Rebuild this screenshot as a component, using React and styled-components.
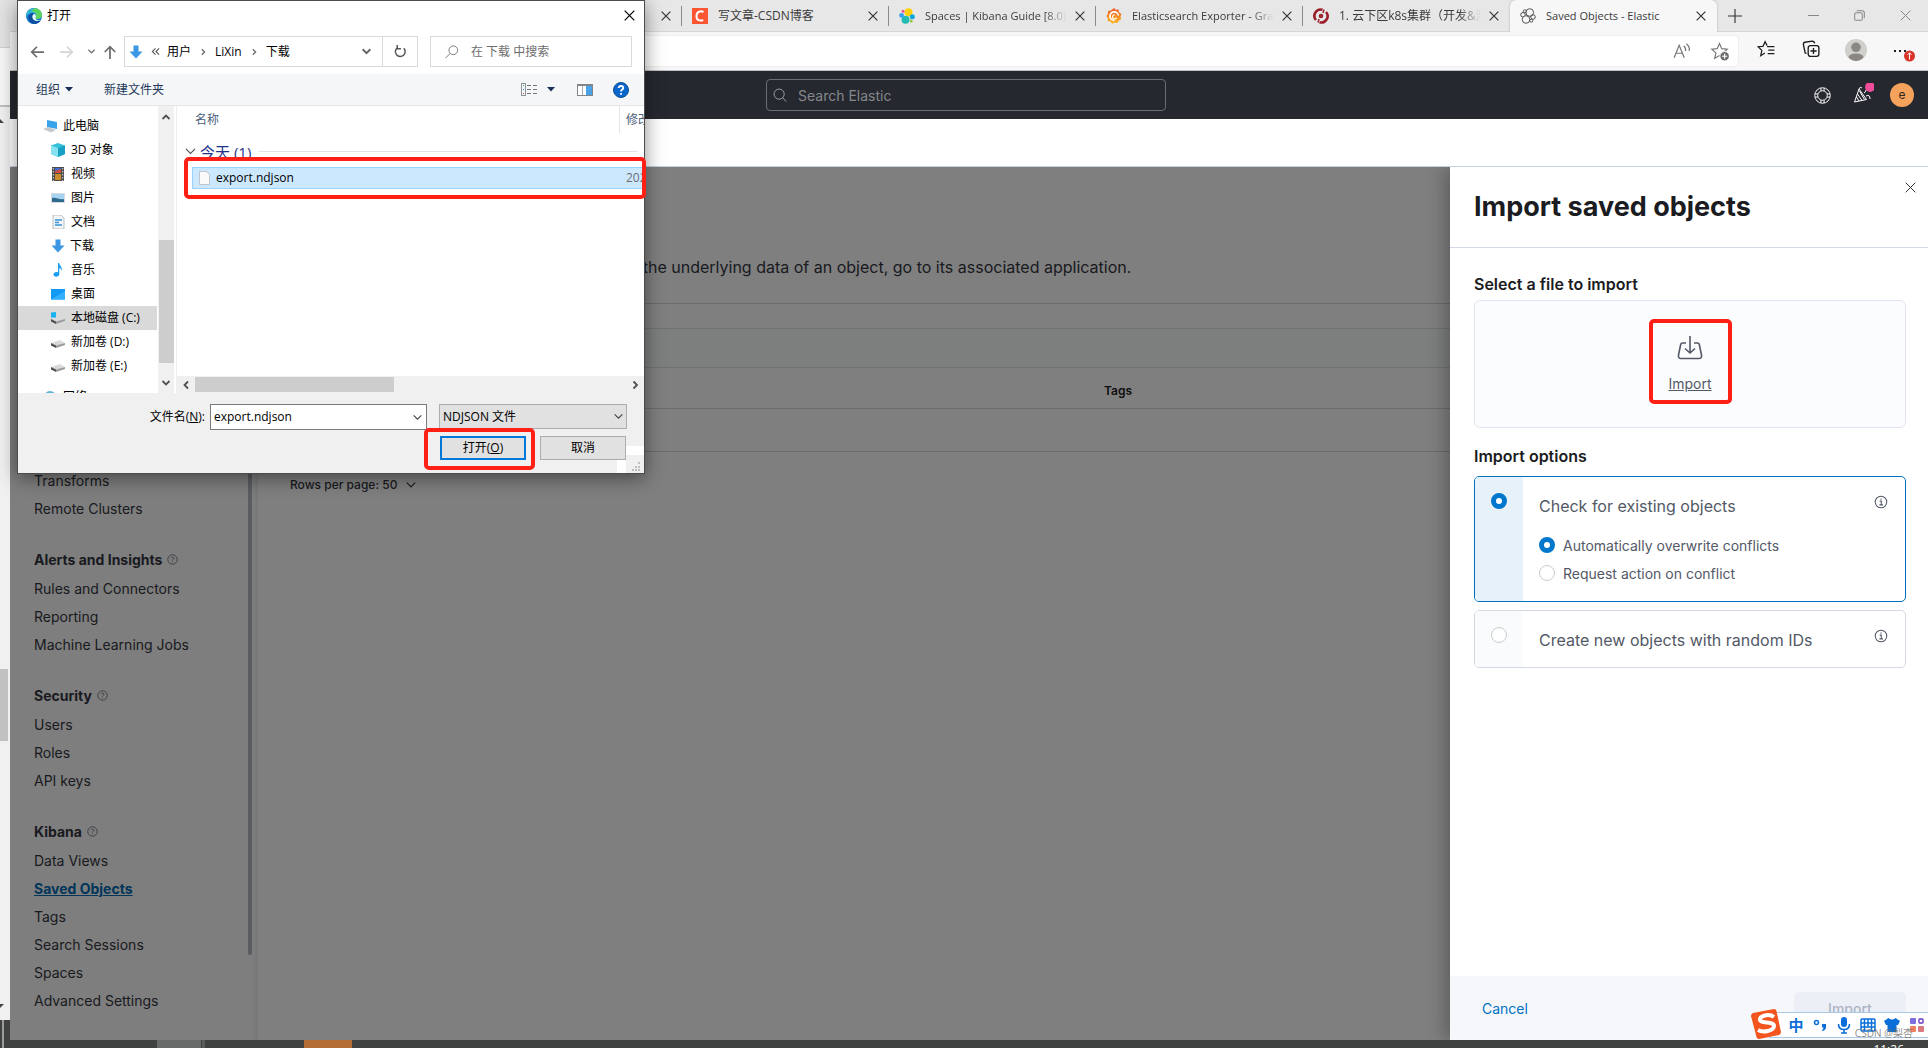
import React from "react";
import styled, { createGlobalStyle, css } from "styled-components";

const ui = `"Open Sans", "Noto Sans CJK SC", sans-serif`;
const inter = `Inter, "Noto Sans CJK SC", sans-serif`;

const Global = createGlobalStyle`
  * { box-sizing: border-box; }
  body { margin: 0; background: #3f4241; font-family: ${inter}; }
  button, input, select { font: inherit; color: inherit; margin: 0; }
  svg { display: block; flex: none; }
  h2, h3, p, ul { margin: 0; padding: 0; }
  ul { list-style: none; }
`;

/* ---------- desktop ---------- */
const Desktop = styled.div`
  position: relative;
  display: grid;
  grid-template-columns: 10px 1fr;
  height: 100vh;
  overflow: hidden;
`;
const Column = styled.div`
  display: flex;
  flex-direction: column;
  min-width: 0;
  min-height: 0;
`;
const BackWindow = styled.div`
  flex: 1;
  display: flex;
  flex-direction: column;
  background: #f0f0f0;
`;
const BackTabs = styled.div`
  height: 48px;
  background: #e3e3e3;
  border-bottom: 1px solid #cfcfcf;
`;
const BackToolbar = styled.div`
  height: 59px;
  background: #f7f7f7;
  border-bottom: 2px solid #bdbdbd;
`;
const BackTrack = styled.div`
  flex: 1;
  display: flex;
  flex-direction: column;
  justify-content: space-between;
  padding: 12px 0;
`;
const BackThumb = styled.div`
  width: 8px;
  height: 72px;
  margin-top: 430px;
  margin-bottom: 148px;
  background: #c1c1c1;
`;
const BackTaskbar = styled.div`
  height: 28px;
  background: #3f4241;
  border-left: 2px solid #3f4241;
  box-shadow: inset 2px 0 #9a9c9b;
`;
const Taskbar = styled.footer`
  height: 8px;
  display: flex;
  background: #3f4241;
  overflow: hidden;
`;
const TaskItem = styled.div`
  width: ${(p) => p.$width}px;
  margin-left: ${(p) => p.$gap}px;
  background: ${(p) => p.$color};
`;
const Clock = styled.time`
  margin-left: auto;
  padding: 3px 24px 0 0;
  font: 12px/14px ${ui};
  color: #fff;
`;

/* ---------- browser chrome ---------- */
const IconButton = styled.button`
  display: flex;
  align-items: center;
  justify-content: center;
  flex: none;
  width: ${(p) => p.$w || 20}px;
  height: ${(p) => p.$h || 20}px;
  padding: 0;
  border: 0;
  background: none;
  color: ${(p) => p.$color || "#333"};
`;
const TabStrip = styled.div`
  display: flex;
  height: 32px;
  padding-left: 465px;
  background: #e7e7e7;
  border-bottom: 1px solid #d6d6d6;
`;
const Tab = styled.div`
  display: flex;
  align-items: center;
  gap: 3px;
  width: 207px;
  padding: 0 6px 0 10px;
  color: #3b3b3b;
  font-family: ${ui};
  font-size: ${(p) => (p.$cjk ? 12 : 11)}px;
  background: linear-gradient(#8a8a8a, #8a8a8a) right 6px / 1px 20px no-repeat;
  ${(p) => p.$plain && css`background: none;`}
  ${(p) =>
    p.$active &&
    css`
      height: 32px;
      background: #f7f7f7;
      border-radius: 6px 6px 0 0;
      box-shadow: 0 0 2px rgba(0, 0, 0, 0.3);
      clip-path: inset(0 -3px 0 -3px);
    `}
`;
const TabTitle = styled.span`
  flex: 1;
  margin-left: 7px;
  overflow: hidden;
  white-space: nowrap;
  line-height: 18px;
  ${(p) => p.$fade && css`mask-image: linear-gradient(90deg, #000 84%, transparent);`}
`;
const WindowControls = styled.div`
  display: flex;
  margin-left: auto;
`;
const Toolbar = styled.div`
  display: flex;
  align-items: center;
  height: 39px;
  background: #f7f7f7;
  border-bottom: 1px solid #bfc2c2;
`;
const AddressField = styled.div`
  flex: 1;
  display: flex;
  justify-content: flex-end;
  align-items: center;
  gap: 17px;
  height: 30px;
  margin-left: 8px;
  padding-right: 9px;
  background: #fff;
  border-radius: 4px;
  box-shadow: 0 0 2px rgba(0, 0, 0, 0.12);
`;
const ToolbarActions = styled.div`
  display: grid;
  grid-template-columns: repeat(4, 45px);
  justify-items: center;
  padding: 0 5px;
`;

/* ---------- kibana ---------- */
const KibanaHeader = styled.header`
  display: grid;
  grid-template-columns: 1fr 400px 1fr;
  align-items: center;
  height: 48px;
  flex: none;
  padding: 0 14px 0 8px;
  background: #25282f;
`;
const SearchBox = styled.label`
  grid-column: 2;
  display: flex;
  align-items: center;
  gap: 11px;
  height: 32px;
  padding: 0 6px;
  border: 1px solid #6b6e75;
  border-radius: 4px;
  color: #a8abb0;
`;
const SearchInput = styled.input`
  flex: 1;
  min-width: 0;
  padding: 0;
  border: 0;
  outline: 0;
  background: none;
  font-size: 14px;
  &::placeholder { color: #85878c; opacity: 1; }
`;
const HeaderActions = styled.div`
  grid-column: 3;
  display: flex;
  justify-content: flex-end;
  align-items: center;
  gap: 16px;
`;
const Avatar = styled.button`
  width: 24px;
  height: 24px;
  padding: 0;
  border: 0;
  border-radius: 50%;
  background: #f5a35c;
  color: #33261a;
  font-size: 12px;
  line-height: 24px;
`;
const BreadcrumbBar = styled.div`
  height: 48px;
  flex: none;
  background: #fff;
  border-bottom: 1px solid #c9d1e0;
`;
const Workspace = styled.div`
  position: relative;
  flex: 1;
  display: flex;
  min-height: 0;
  overflow: hidden;
  background: #fff;
`;
const Sidebar = styled.nav`
  display: flex;
  flex: none;
  width: 248px;
  background: #fdfdfd;
`;
const SideList = styled.div`
  flex: 1;
  padding: 300px 0 0 24px;
`;
const SideThumb = styled.div`
  width: 4px;
  margin-bottom: 85px;
  border-radius: 0 0 2px 2px;
  background: #b4b8c2;
`;
const SideShade = styled.div`
  width: 6px;
  background: linear-gradient(90deg, #fbfcfd, #edf0f5);
`;
const SideSection = styled.section`
  & + & { margin-top: 20px; }
`;
const SideHeading = styled.h3`
  display: flex;
  align-items: center;
  gap: 5px;
  height: 32px;
  font-size: 14px;
  font-weight: 700;
  color: #343741;
`;
const SideLink = styled.a`
  display: block;
  width: fit-content;
  height: 28px;
  font-size: 14px;
  line-height: 28px;
  text-decoration: none;
  color: #343741;
  ${(p) => p.$active && css`color: #006bb4; font-weight: 700; text-decoration: underline;`}
`;
const Content = styled.main`
  flex: 1;
  min-width: 0;
  padding: 88px 22px 0 32px;
  color: #343741;
`;
const Intro = styled.p`
  height: 49px;
  border-bottom: 1px solid #d3d6e0;
  font-size: 16px;
  line-height: 24px;
`;
const FilterBar = styled.div`
  height: 40px;
  margin-top: 24px;
  background: #fafffc;
  border-top: 1px solid #dfe2ea;
  border-bottom: 1px solid #e0e4e4;
`;
const ObjectsTable = styled.table`
  width: 100%;
  table-layout: fixed;
  border-collapse: collapse;
  th {
    height: 40px;
    padding: 6px 6px 0;
    border-bottom: 1px solid #d6d9de;
    text-align: left;
    font-size: 12px;
    font-weight: 600;
    color: #1a1c21;
  }
  td { height: 43px; padding: 0; border-bottom: 1px solid #d3d6e4; }
`;
const PageSize = styled.button`
  display: flex;
  align-items: center;
  gap: 8px;
  height: 24px;
  margin-top: 21px;
  padding: 0;
  border: 0;
  background: none;
  font-size: 12px;
  font-weight: 500;
`;
const Mask = styled.div`
  position: absolute;
  inset: 0;
  background: rgba(0, 0, 0, 0.5);
`;

/* ---------- flyout ---------- */
const Flyout = styled.aside`
  position: absolute;
  inset: 0 0 0 auto;
  display: flex;
  flex-direction: column;
  width: 478px;
  background: #fff;
  color: #343741;
  box-shadow: -4px 0 18px rgba(0, 0, 0, 0.3);
`;
const FlyoutHeader = styled.header`
  display: flex;
  justify-content: space-between;
  height: 81px;
  padding: 20px 8px 0 24px;
  border-bottom: 1px solid #d3dae6;
  button { margin-top: -10px; }
`;
const FlyoutTitle = styled.h2`
  font-size: 27px;
  font-weight: 700;
  line-height: 40px;
  color: #1a1c21;
`;
const FlyoutBody = styled.div`
  flex: 1;
  padding: 24px 22px 0 24px;
`;
const GroupTitle = styled.h3`
  margin-bottom: ${(p) => p.$space || 4}px;
  font-size: 16px;
  font-weight: 600;
  line-height: 24px;
  color: #1a1c21;
  * + & { margin-top: 16px; }
`;
const DropZone = styled.label`
  display: flex;
  justify-content: center;
  align-items: flex-start;
  height: 128px;
  padding-top: 18px;
  border: 1px solid #e2e5ef;
  border-radius: 6px;
  background: #fbfcfd;
`;
const DropPrompt = styled.span`
  position: relative;
  display: flex;
  flex-direction: column;
  align-items: center;
  gap: 13px;
  width: 83px;
  height: 85px;
  padding-top: 16px;
  color: #535966;
  font-size: 14px;
  line-height: 20px;
  text-decoration: underline;
`;
const FileInput = styled.input`
  position: absolute;
  width: 1px;
  height: 1px;
  opacity: 0;
`;
const Marker = styled.span`
  position: absolute;
  inset: ${(p) => p.$inset || "0"};
  border: 4px solid #ff2015;
  border-radius: 5px;
  pointer-events: none;
`;
const Card = styled.div`
  display: grid;
  grid-template-columns: 48px 1fr;
  margin-bottom: 8px;
  border: 1px solid ${(p) => (p.$checked ? "#0071c2" : "#d3dae6")};
  border-radius: 5px;
  overflow: hidden;
`;
const CardRail = styled.div`
  display: flex;
  justify-content: center;
  padding-top: 16px;
  background: ${(p) => (p.$checked ? "#e6f1fa" : "#fafbfd")};
`;
const Radio = styled.input.attrs({ type: "radio" })`
  appearance: none;
  flex: none;
  width: 16px;
  height: 16px;
  border: 1px solid #c9cbcd;
  border-radius: 50%;
  background: #fff;
  &:checked { border: 5px solid #0077cc; }
`;
const CardBody = styled.div`
  padding: 16px;
`;
const CardTitle = styled.div`
  display: flex;
  justify-content: space-between;
  height: 24px;
  padding-right: 1px;
  font-size: 16px;
  line-height: 26px;
  color: #535966;
  svg { margin-top: 2px; }
`;
const SubOptions = styled.div`
  display: grid;
  gap: 8px;
  padding: 18px 0 2px;
`;
const SubOption = styled.label`
  display: flex;
  align-items: center;
  gap: 8px;
  height: 20px;
  font-size: 14px;
  color: #535966;
`;
const FlyoutFooter = styled.footer`
  display: flex;
  align-items: center;
  justify-content: space-between;
  height: 64px;
  padding: 0 22px 0 24px;
  background: #f5f7fb;
`;
const FooterButton = styled.button`
  height: 32px;
  padding: 0 8px;
  border: 0;
  border-radius: 5px;
  background: none;
  font-size: 14px;
  color: #0071c2;
  ${(p) =>
    p.$filled &&
    css`
      width: 112px;
      background: #eceff5;
      color: #abb4c4;
      font-weight: 500;
    `}
`;

/* ---------- input method bar ---------- */
const ImeBar = styled.div`
  position: absolute;
  right: 0;
  bottom: 10px;
  display: flex;
  align-items: center;
  gap: 4px;
  height: 26px;
  padding: 0 0 0 16px;
  border: 1px solid #a9c9e8;
  border-right: 0;
  background: #fff;
`;
const ImeLogo = styled.span`
  position: absolute;
  left: -20px;
  top: -5px;
`;
const ImeText = styled.span`
  font: 700 15px/20px ${ui};
`;
const Watermark = styled.span`
  position: absolute;
  right: 15px;
  bottom: 6px;
  font: 10px/18px ${ui};
  color: rgba(110, 110, 110, 0.8);
`;

/* ---------- file dialog ---------- */
const Dialog = styled.section`
  position: absolute;
  left: 17px;
  top: 0;
  width: 628px;
  background: #fff;
  border: 1px solid #4c4c4c;
  box-shadow: 0 4px 18px rgba(0, 0, 0, 0.45);
  font-family: ${ui};
  font-size: 12px;
  line-height: 18px;
  color: #000;
`;
const DialogTitle = styled.header`
  display: flex;
  align-items: center;
  gap: 5px;
  height: 35px;
  padding: 0 5px 6px 8px;
  button { margin-left: auto; }
`;
const DialogNav = styled.div`
  display: flex;
  align-items: center;
  height: 31px;
  padding: 0 12px 0 9px;
`;
const PathBox = styled.div`
  display: flex;
  align-items: center;
  flex: none;
  width: 294px;
  height: 31px;
  margin-left: 1px;
  padding-left: 4px;
  border: 1px solid #d9d9d9;
`;
const Crumb = styled.button`
  padding: 0;
  border: 0;
  background: none;
`;
const CrumbMark = styled.span`
  display: flex;
  justify-content: center;
  width: 24px;
`;
const PathControl = styled.span`
  display: flex;
  margin-left: ${(p) => (p.$first ? "auto" : "0")};
  border-left: ${(p) => (p.$first ? "0" : "1px solid #d9d9d9")};
`;
const DialogSearch = styled.label`
  display: flex;
  align-items: center;
  gap: 12px;
  flex: 1;
  height: 31px;
  margin-left: 12px;
  padding-left: 14px;
  border: 1px solid #d9d9d9;
  color: #6d6d6d;
  input {
    width: 100px;
    padding: 0;
    border: 0;
    outline: 0;
  }
  input::placeholder { color: #6d6d6d; opacity: 1; }
`;
const CommandBar = styled.div`
  display: flex;
  align-items: center;
  height: 32px;
  margin-top: 7px;
  padding: 0 13px 0 18px;
  background: #f5f6f7;
  border-bottom: 1px solid #e4e7ea;
  color: #1e395b;
`;
const Command = styled.button`
  display: flex;
  align-items: center;
  gap: ${(p) => (p.$push ? 9 : 5)}px;
  margin-right: ${(p) => p.$gap}px;
  padding: 0;
  border: 0;
  background: none;
  ${(p) => p.$push && css`margin-left: auto;`}
`;
const DialogBody = styled.div`
  display: grid;
  grid-template-columns: 139px 17px 1fr;
  height: 287px;
`;
const Tree = styled.ul`
  padding-top: 8px;
  overflow: hidden;
`;
const TreeItem = styled.li`
  display: flex;
  align-items: center;
  gap: 5px;
  height: 24px;
  padding-left: ${(p) => (p.$root ? 25 : 33)}px;
  margin-top: ${(p) => (p.$spaced ? 7 : 0)}px;
  background: ${(p) => (p.$selected ? "#d9d9d9" : "none")};
  white-space: nowrap;
`;
const VScroll = styled.div`
  display: flex;
  flex-direction: column;
  justify-content: space-between;
  align-items: center;
  margin-left: 1px;
  padding: 6px 0 5px;
  background: #f0f0f0;
`;
const VThumb = styled.div`
  width: 15px;
  height: 123px;
  margin-top: 102px;
  background: #cdcdcd;
`;
const FilePane = styled.div`
  display: flex;
  flex-direction: column;
  min-width: 0;
  margin-left: 2px;
  border-left: 1px solid #efefef;
`;
const FileArea = styled.div`
  flex: 1;
  padding-left: 7px;
  overflow: hidden;
`;
const FileTable = styled.table`
  width: 520px;
  table-layout: fixed;
  border-spacing: 0;
  th, td { padding: 0; text-align: left; font-weight: 400; white-space: nowrap; }
  thead th { height: 27px; color: #4c607a; padding-left: 3px; }
  thead th:last-child { border-left: 1px solid #e5e5e5; padding-left: 6px; }
`;
const GroupLabel = styled.div`
  display: flex;
  align-items: center;
  gap: 3px;
  width: 453px;
  height: 34px;
  padding-top: 3px;
  font-size: 15px;
  color: #1e3287;
  &::after {
    content: "";
    flex: 1;
    height: 1px;
    margin-left: 5px;
    background: #e2e2e2;
  }
`;
const FileCell = styled.td`
  height: 22px;
  background: #cce8ff;
  border: solid #99d1ff;
  border-width: 1px 0 1px ${(p) => (p.$first ? 1 : 0)}px;
  color: ${(p) => (p.$first ? "#000" : "#6d6d6d")};
  && { padding-left: ${(p) => (p.$first ? 6 : 7)}px; }
`;
const FileName = styled.span`
  display: flex;
  align-items: center;
  gap: 6px;
  height: 20px;
`;
const HScroll = styled.div`
  display: flex;
  align-items: center;
  height: 17px;
  padding: 0 4px;
  background: #f0f0f0;
  svg:last-child { margin-left: auto; }
`;
const HThumb = styled.div`
  width: 199px;
  height: 15px;
  margin-left: 4px;
  background: #cdcdcd;
`;
const DialogFooter = styled.div`
  display: grid;
  grid-template-columns: 187px 217px 188px;
  align-content: start;
  column-gap: 12px;
  row-gap: 6px;
  height: 80px;
  padding-top: 11px;
  background: #f0f0f0;
`;
const FieldLabel = styled.label`
  justify-self: end;
  line-height: 26px;
`;
const ComboBox = styled.div`
  display: flex;
  align-items: center;
  height: 26px;
  margin-left: -7px;
  margin-right: 7px;
  padding: 0 3px;
  border: 1px solid #7a7a7a;
  background: #fff;
  input { flex: 1; min-width: 0; padding: 0; border: 0; outline: 0; background: none; }
`;
const TypeSelect = styled.div`
  position: relative;
  height: 25px;
  margin-left: -7px;
  margin-right: 7px;
  select {
    appearance: none;
    width: 100%;
    height: 100%;
    padding: 0 3px;
    border: 1px solid #adadad;
    border-radius: 0;
    background: #e1e1e1;
  }
  svg { position: absolute; right: 3px; top: 7px; }
`;
const DialogActions = styled.div`
  grid-column: 3;
  display: flex;
  gap: 14px;
  margin-left: -6px;
`;
const ActionSlot = styled.div`
  position: relative;
  height: 24px;
`;
const DialogButton = styled.button`
  display: block;
  width: 86px;
  height: 24px;
  padding: 0;
  border: ${(p) => (p.$primary ? "2px solid #0078d7" : "1px solid #adadad")};
  background: #e1e1e1;
`;
const Grip = styled.span`
  position: absolute;
  right: 0;
  bottom: 0;
`;

/* ---------- icons ---------- */
const Stroke = ({ w = 16, h, box = 16, sw = 1, d, color = "currentColor", children }) => (
  <svg width={w} height={h || w} viewBox={`0 0 ${box} ${box}`} fill="none" stroke={color} strokeWidth={sw} aria-hidden="true">
    {d && <path d={d} />}
    {children}
  </svg>
);
const Cross = ({ size = 10, sw = 1.2 }) => <Stroke w={size} sw={(sw * 16) / size} d="M1 1L15 15M15 1L1 15" />;
const Chevron = ({ dir = "down", size = 10, sw = 1.3, color }) => {
  const d = { down: "M1.5 3L5 6.500L8.500 3", up: "M1.500 7L5 3.500L8.500 7", left: "M7 1.500L3.500 5L7 8.500", right: "M3.500 1.500L7 5L3.500 8.500" }[dir];
  return <Stroke w={size} box={10} sw={sw} d={d} color={color} />;
};
const Triangle = () => <svg width="8" height="5" viewBox="0 0 8 5"><path d="M0 0H8L4 4.500Z" fill="#1a2f55" /></svg>;
const Help = () => (
  <Stroke w={11} box={11} sw={0.9} color="#6a707d">
    <circle cx="5.500" cy="5.500" r="4.700" />
    <path d="M4 4.300C4 2.800 7 2.800 7 4.300C7 5.300 5.500 5.300 5.500 6.400M5.500 7.400V8.300" />
  </Stroke>
);
const Info = () => (
  <Stroke w={14} sw={1.2} color="#535966">
    <circle cx="8" cy="8" r="6.600" />
    <path d="M6.500 7H8.300V11M6.200 11.300H10.300M8 4V5.400" />
  </Stroke>
);
const Magnifier = ({ flip }) => (
  <Stroke w={14}>{flip ? <><circle cx="9.500" cy="6" r="5" /><path d="M6 9.500L0.500 15" /></> : <><circle cx="7" cy="7" r="5.800" /><path d="M11 11L15 15.500" /></>}</Stroke>
);
const CsdnIcon = () => (
  <svg width="16" height="16" viewBox="0 0 16 16"><rect width="16" height="16" fill="#fc5531" /><path d="M11.500 4.200C9 2.500 4.500 3.300 4.500 8.200C4.500 12.500 8 13.300 11.200 12" fill="none" stroke="#fff" strokeWidth="2" /></svg>
);
const ElasticIcon = () => (
  <svg width="16" height="16" viewBox="0 0 16 16">
    <circle cx="9.500" cy="4.300" r="4" fill="#fed10a" /><circle cx="6.500" cy="11.800" r="4" fill="#24bbb1" />
    <circle cx="2.600" cy="7.400" r="2.400" fill="#36a2ef" /><circle cx="13.300" cy="8.700" r="2.500" fill="#07a5de" />
    <circle cx="4" cy="3.300" r="1.500" fill="#ef5098" /><circle cx="12.200" cy="12.900" r="1.500" fill="#93c83e" />
  </svg>
);
const GrafanaIcon = () => (
  <svg width="16" height="16" viewBox="0 0 16 16" fill="none">
    <defs><linearGradient id="grafana" x1="0" y1="0" x2="0" y2="1"><stop offset="0" stopColor="#ee5a2b" /><stop offset="1" stopColor="#fbb81c" /></linearGradient></defs>
    <path d="M8 0L9.800 1.800L12.500 1.600L13 4.300L15.500 6L14.500 8.500L15.200 11.200L12.800 12.500L11.500 15L8.800 14.500L6.200 15.800L4.500 13.500L1.700 13L1.900 10.200L0.300 8L2 5.800L2 3L4.800 2.600Z" fill="url(#grafana)" />
    <path d="M12.300 7.500A4.200 4.200 0 1 0 8.500 12.300" stroke="#fff" strokeWidth="1.700" />
    <path d="M10.500 9.500A2 2 0 1 1 8.800 7" stroke="#fff" strokeWidth="1.200" />
  </svg>
);
const ClusterIcon = () => (
  <svg width="16" height="16" viewBox="0 0 16 16" fill="none" stroke="#9b1f2b" strokeWidth="2.600">
    <path d="M9.500 1.800A6.300 6.300 0 0 0 3 12M6.500 14.200A6.300 6.300 0 0 0 13 4" /><circle cx="8" cy="8" r="1" /><path d="M11 1.500L10 5M5 14.500L6 11" strokeWidth="1.500" />
  </svg>
);
const ElasticOutline = () => (
  <Stroke color="#555" sw={1}>
    <circle cx="9.800" cy="4.500" r="3.800" fill="#f7f7f7" /><circle cx="3" cy="6.800" r="2.300" /><circle cx="13" cy="9" r="2.300" /><circle cx="6" cy="11.500" r="3.800" fill="#f7f7f7" /><circle cx="4.800" cy="3.300" r="1.500" /><circle cx="11.300" cy="12.700" r="1.500" />
  </Stroke>
);
const EdgeIcon = () => (
  <svg width="16" height="16" viewBox="0 0 16 16">
    <circle cx="8" cy="8" r="8" fill="#1479cf" />
    <path d="M0.500 6C2-1 14-2 16 7C16 11 11 12 9.500 10C11 8 9 5 6 5C3 5 1 7 0.500 9Z" fill="#2fb6d0" />
    <path d="M9 0.100C13 0.500 16 3.500 16 7.500C15.500 11 11 12 9.500 10C12 6 9 3 5 3Z" fill="#5fd45a" />
    <path d="M6 5C0 7 2 15.500 8 16C11 16 13.500 14.500 14.700 12.500C10 14.500 6 12 6.500 8C6.700 6.500 8 6 8.500 6C8 5.200 7 5 6 5Z" fill="#0c4f9e" />
    <path d="M9.500 10C10.500 8.500 10 6.500 8.500 6C6 6.500 5.500 10 8 12C10 13.500 13 13.300 14.700 12.500C12.500 12.800 10 12 9.500 10Z" fill="#e8f5fb" />
  </svg>
);
const DownArrow = ({ size = 14 }) => <svg width={size} height={size} viewBox="0 0 14 14"><path d="M4.500 0.500H9.500V6.500H13.500L7 13.500L0.500 6.500H4.500Z" fill="#3b97e3" /></svg>;
const TreeIcon = ({ kind }) => {
  const body = {
    pc: <><path d="M4 1L14 3V10L4 8Z" fill="#37a3ea" /><path d="M0 10L5 8L13 11L8 13.500Z" fill="#c3c8cd" /></>,
    cube: <><path d="M7 0L14 2.500V11L7 14L0 11V2.500Z" fill="#35bfd8" /><path d="M0 2.500L7 5V14L0 11Z" fill="#86e2ee" /><path d="M7 5L14 2.500V11L7 14Z" fill="#17a0c4" /></>,
    video: <><rect x="1" width="12" height="14" fill="#4b4b4b" /><rect x="4" y="1" width="6" height="5" fill="#3c6fd1" /><rect x="4" y="7" width="6" height="6" fill="#c98d2c" /><path d="M4 4L10 2V6H4Z" fill="#d44b38" /><path d="M2.300 1V14M11.700 1V14" stroke="#ddd" strokeDasharray="1.500 1.500" /></>,
    image: <><rect y="2" width="14" height="10" fill="#d7dadd" /><rect x="1" y="3" width="12" height="8" fill="#a6d4f2" /><path d="M1 7C5 6 8 9 13 8V11H1Z" fill="#2d6a8c" /></>,
    doc: <><path d="M2 0H10L13 3V14H2Z" fill="#f3f5f7" stroke="#a9b0b7" strokeWidth=".8" /><path d="M4 5H11M4 7.500H8M4 10H11" stroke="#3a94d8" strokeWidth="1.300" /></>,
    music: <path d="M7 0H8.200C8.500 3 12 4 10.500 8C10.500 6 9 5 8.300 5V11C8.300 14.500 2.500 14.500 2.500 11.500C2.500 9.500 5 8.500 7 9.500Z" fill="#1b9df0" />,
    desk: <><rect y="2" width="14" height="10.500" fill="#1199f5" /><path d="M0 12.500L14 4V12.500Z" fill="#33b0ff" /></>,
    disk: <><path d="M0 8L9 5L14 8L5 11Z" fill="#d9dadb" /><path d="M0 8L5 10.500V13L0 10.500Z" fill="#4e5052" /><path d="M5 10.500L14 8V10L5 13Z" fill="#9b9da0" /></>,
    net: <circle cx="7" cy="7" r="6" fill="#5bb2d8" />,
  }[kind === "system" ? "disk" : kind];
  if (kind === "down") return <DownArrow />;
  return <svg width="15" height="14" viewBox="0 0 15 14">{body}{kind === "system" && <path d="M0 1.500L5 1V6.500H0Z" fill="#19b4f0" />}</svg>;
};
const Star = "M8 1.300L9.900 5.600L14.500 6L11 9.200L12 13.800L8 11.400L4 13.800L5 9.200L1.500 6L6.100 5.600Z";

/* ---------- data ---------- */
const tabs = [
  { title: "写文章-CSDN博客", icon: <CsdnIcon />, cjk: true },
  { title: "Spaces | Kibana Guide [8.0]", icon: <ElasticIcon />, fade: true },
  { title: "Elasticsearch Exporter - Gra", icon: <GrafanaIcon />, fade: true },
  { title: "1. 云下区k8s集群（开发&测", icon: <ClusterIcon />, cjk: true, fade: true, plain: true },
  { title: "Saved Objects - Elastic", icon: <ElasticOutline />, active: true },
];
const sections = [
  { links: ["Transforms", "Remote Clusters"] },
  { title: "Alerts and Insights", links: ["Rules and Connectors", "Reporting", "Machine Learning Jobs"] },
  { title: "Security", links: ["Users", "Roles", "API keys"] },
  { title: "Kibana", links: ["Data Views", "Saved Objects", "Tags", "Search Sessions", "Spaces", "Advanced Settings"] },
];
const tree = [
  ["pc", "此电脑"], ["cube", "3D 对象"], ["video", "视频"], ["image", "图片"], ["doc", "文档"], ["down", "下载"],
  ["music", "音乐"], ["desk", "桌面"], ["system", "本地磁盘 (C:)"], ["disk", "新加卷 (D:)"], ["disk", "新加卷 (E:)"], ["net", "网络"],
];

function Browser() {
  return (
    <>
      <TabStrip>
        <Tab><TabTitle /><IconButton aria-label="Close tab"><Cross /></IconButton></Tab>
        {tabs.map((t) => (
          <Tab key={t.title} $active={t.active} $cjk={t.cjk} $plain={t.plain}>
            {t.icon}
            <TabTitle $fade={t.fade}>{t.title}</TabTitle>
            <IconButton aria-label="Close tab"><Cross /></IconButton>
          </Tab>
        ))}
        <IconButton $w={36} $h={31} aria-label="New tab"><Stroke w={14} d="M8 0V16M0 8H16" sw={1.3} /></IconButton>
        <WindowControls>
          <IconButton $w={46} $h={31} $color="#888" aria-label="Minimize"><Stroke w={11} d="M0 8H16" sw={1.5} /></IconButton>
          <IconButton $w={46} $h={31} $color="#888" aria-label="Restore"><Stroke w={11} sw={1.5}><rect x="1" y="4" width="11" height="11" rx="2" /><path d="M4 1H12Q15 1 15 4V12" /></Stroke></IconButton>
          <IconButton $w={46} $h={31} $color="#888" aria-label="Close window"><Cross size={11} sw={1} /></IconButton>
        </WindowControls>
      </TabStrip>
      <Toolbar>
        <AddressField>
          <IconButton $color="#777" aria-label="Read aloud"><Stroke w={18} sw={1.1} d="M1 14L5.500 3L10 14M2.700 10H8.300M9.500 3.500Q11.500 5 11.200 8M12 1.500Q15 4 14.500 8" /></IconButton>
          <IconButton $color="#777" aria-label="Add to favorites"><Stroke w={19} sw={1}><path d={Star} /><circle cx="12.300" cy="12" r="4" fill="#6d6d6d" stroke="#fff" strokeWidth=".8" /><path d="M12.300 9.800V14.200M10.100 12H14.500" stroke="#fff" /></Stroke></IconButton>
        </AddressField>
        <ToolbarActions>
          <IconButton $color="#1c1c1c" aria-label="Favorites"><Stroke w={18} sw={1.1}><path d="M9 5L7.200 1.500L5.300 5.600L1 6L4.300 9.200L3.300 14L7 11.500" /><path d="M9 5.800H15.500M10 9H15.500M9.500 12.200H15.500" /></Stroke></IconButton>
          <IconButton $color="#1c1c1c" aria-label="Collections"><Stroke w={18} sw={1.2}><rect x="5.500" y="5" width="9.500" height="9.500" rx="2" /><path d="M10.200 7V12.500M7.500 9.800H13M4 12L2.800 11.500L1.200 4Q1 2.500 2.500 2L9 1Q11 1 11.200 3" /></Stroke></IconButton>
          <IconButton $w={22} $h={22} aria-label="Profile"><svg width="22" height="22" viewBox="0 0 22 22"><circle cx="11" cy="11" r="11" fill="#d1cfcc" /><circle cx="11" cy="8.300" r="4.800" fill="#8b8784" /><path d="M3.500 18.500C4 13 18 13 18.500 18.500C14 23 8 23 3.500 18.500Z" fill="#8b8784" /></svg></IconButton>
          <IconButton $w={30} $h={24} aria-label="Settings and more"><svg width="30" height="24" viewBox="0 0 30 24"><path d="M8 12h2M13 12h2M18 12h2" stroke="#1c1c1c" strokeWidth="2" /><circle cx="23.500" cy="17" r="5.500" fill="#d8352a" /><path d="M23.500 20.500V14M21.500 15.800L23.500 13.800L25.500 15.800" stroke="#fff" fill="none" /></svg></IconButton>
        </ToolbarActions>
      </Toolbar>
    </>
  );
}

function ImportFlyout() {
  return (
    <Flyout>
      <FlyoutHeader>
        <FlyoutTitle>Import saved objects</FlyoutTitle>
        <IconButton aria-label="Close flyout"><Cross size={11} sw={1} /></IconButton>
      </FlyoutHeader>
      <FlyoutBody>
        <GroupTitle>Select a file to import</GroupTitle>
        <DropZone>
          <FileInput type="file" />
          <DropPrompt>
            <Stroke w={26} box={26} sw={1.6}>
              <path d="M9 8H5.500Q4 8 3.700 9.500L1.500 20Q1 23.500 4 23.500H22Q25 23.500 24.500 20L22.300 9.500Q22 8 20.500 8H17M13 1V18M8 13.500L13 18L18 13.500" />
            </Stroke>
            Import
            <Marker />
          </DropPrompt>
        </DropZone>
        <GroupTitle $space={8}>Import options</GroupTitle>
        <Card $checked>
          <CardRail $checked><Radio name="mode" id="check" defaultChecked /></CardRail>
          <CardBody>
            <CardTitle><label htmlFor="check">Check for existing objects</label><Info /></CardTitle>
            <SubOptions>
              <SubOption><Radio name="conflict" defaultChecked />Automatically overwrite conflicts</SubOption>
              <SubOption><Radio name="conflict" />Request action on conflict</SubOption>
            </SubOptions>
          </CardBody>
        </Card>
        <Card>
          <CardRail><Radio name="mode" id="random" /></CardRail>
          <CardBody><CardTitle><label htmlFor="random">Create new objects with random IDs</label><Info /></CardTitle></CardBody>
        </Card>
      </FlyoutBody>
      <FlyoutFooter>
        <FooterButton>Cancel</FooterButton>
        <FooterButton $filled disabled>Import</FooterButton>
      </FlyoutFooter>
    </Flyout>
  );
}

function Kibana() {
  return (
    <>
      <KibanaHeader>
        <SearchBox><Magnifier /><SearchInput type="search" placeholder="Search Elastic" aria-label="Search Elastic" /></SearchBox>
        <HeaderActions>
          <IconButton $w={24} $h={24} $color="#fff" aria-label="Help menu"><Stroke w={17} sw={0.9}><circle cx="8" cy="8" r="7.300" /><circle cx="8" cy="8" r="4.500" /><path d="M6.500 1V3.700M9.500 1V3.700M6.500 12.300V15M9.500 12.300V15M1 6.500H3.700M1 9.500H3.700M12.300 6.500H15M12.300 9.500H15" /></Stroke></IconButton>
          <IconButton $w={24} $h={24} $color="#fff" aria-label="News"><svg width="24" height="24" viewBox="0 0 24 24" fill="none" stroke="#fff"><path d="M4.500 19L9 6L16.500 16.500ZM7.500 11L12 17.500M6.500 14L9 18M9.500 8L14.500 16.500M9 6Q10 3 12 5M14 10Q16 9 16 7M16 13Q20 11 20 16" /><circle cx="20" cy="4" r="5" fill="#f04e98" stroke="none" /></svg></IconButton>
          <Avatar>e</Avatar>
        </HeaderActions>
      </KibanaHeader>
      <BreadcrumbBar />
      <Workspace>
        <Sidebar>
          <SideList>
            {sections.map((s, i) => (
              <SideSection key={i}>
                {s.title && <SideHeading>{s.title}<Help /></SideHeading>}
                {s.links.map((l) => <SideLink key={l} href="#" $active={l === "Saved Objects"}>{l}</SideLink>)}
              </SideSection>
            ))}
          </SideList>
          <SideThumb />
          <SideShade />
        </Sidebar>
        <Content>
          <Intro>Manage and share your saved objects. To edit the underlying data of an object, go to its associated application.</Intro>
          <FilterBar />
          <ObjectsTable>
            <thead><tr><th /><th>Tags</th></tr></thead>
            <tbody><tr><td /><td /></tr></tbody>
          </ObjectsTable>
          <PageSize>Rows per page: 50<Chevron size={12} sw={1} /></PageSize>
        </Content>
        <Mask />
        <ImportFlyout />
      </Workspace>
    </>
  );
}

function FileDialog() {
  return (
    <Dialog role="dialog" aria-label="打开">
      <DialogTitle><EdgeIcon />打开<IconButton aria-label="关闭" $color="#000"><Cross size={11} sw={1.2} /></IconButton></DialogTitle>
      <DialogNav>
        <IconButton aria-label="后退" $color="#6d6d6d"><Stroke w={14} sw={2} d="M16 8H2M8 2L2 8L8 14" /></IconButton>
        <IconButton $w={39} aria-label="前进" $color="#d5d5d5"><Stroke w={14} sw={2} d="M0 8H14M8 2L14 8L8 14" /></IconButton>
        <IconButton $w={10} aria-label="最近的位置" $color="#777"><Chevron size={9} sw={1.5} /></IconButton>
        <IconButton $w={27} aria-label="上移" $color="#6d6d6d"><Stroke w={14} sw={2} d="M8 16V2M2 8L8 2L14 8" /></IconButton>
        <PathBox>
          <DownArrow />
          <CrumbMark><Stroke w={9} box={10} sw={1.2} d="M5 1.500L1.500 5L5 8.500M9 1.500L5.500 5L9 8.500" color="#555" /></CrumbMark>
          <Crumb>用户</Crumb>
          <CrumbMark><Chevron dir="right" size={8} color="#666" sw={1.6} /></CrumbMark>
          <Crumb>LiXin</Crumb>
          <CrumbMark><Chevron dir="right" size={8} color="#666" sw={1.6} /></CrumbMark>
          <Crumb>下载</Crumb>
          <PathControl $first><IconButton $w={32} aria-label="历史记录" $color="#666"><Chevron size={11} sw={1.8} /></IconButton></PathControl>
          <PathControl><IconButton $w={34} $h={29} aria-label="刷新" $color="#555"><Stroke w={13} sw={1.8} d="M4 3.500A6 6 0 1 0 12 4M4 0V4.500H8.500" /></IconButton></PathControl>
        </PathBox>
        <DialogSearch><Magnifier flip /><input placeholder="在 下载 中搜索" aria-label="在 下载 中搜索" /></DialogSearch>
      </DialogNav>
      <CommandBar>
        <Command $gap={31}>组织<Triangle /></Command>
        <Command $gap={0}>新建文件夹</Command>
        <Command $push $gap={22} aria-label="更改视图">
          <svg width="17" height="14" viewBox="0 0 17 14" fill="none"><rect x=".5" y=".5" width="4" height="12" stroke="#8d9298" /><path d="M6 2.500h4M12 2.500h4M6 6.500h4M12 6.500h4M6 10.500h4M12 10.500h4" stroke="#777" /><path d="M2.500 2v1" stroke="#39a84a" /><path d="M2.500 6v1" stroke="#3b7fd1" /><path d="M2.500 10v1" stroke="#d33" /></svg>
          <Triangle />
        </Command>
        <Command $gap={20} aria-label="预览窗格"><svg width="16" height="12" viewBox="0 0 16 12"><rect x=".5" y=".5" width="15" height="11" fill="#fff" stroke="#808589" /><path d="M0 1H16" stroke="#808589" strokeWidth="2" /><rect x="9" y="2" width="6" height="9" fill="#4aa3e8" /><path d="M5.500 2V11" stroke="#aaa" /></svg></Command>
        <Command $gap={2} aria-label="帮助"><svg width="16" height="16" viewBox="0 0 16 16"><circle cx="8" cy="8" r="7.500" fill="#0a66cc" stroke="#0b4f94" /><path d="M5.700 6C5.700 3.300 10.300 3.300 10.300 6C10.300 7.500 8 7.700 8 9.500M8 11V12.800" fill="none" stroke="#fff" strokeWidth="1.800" /></svg></Command>
      </CommandBar>
      <DialogBody>
        <Tree>
          {tree.map(([kind, name]) => (
            <TreeItem key={name} $root={kind === "pc" || kind === "net"} $spaced={kind === "net"} $selected={kind === "system"}><TreeIcon kind={kind} />{name}</TreeItem>
          ))}
        </Tree>
        <VScroll><Chevron dir="up" sw={1.8} color="#505050" /><VThumb /><Chevron sw={1.8} color="#505050" /></VScroll>
        <FilePane>
          <FileArea>
            <FileTable>
              <colgroup><col width="8" /><col width="427" /><col width="85" /></colgroup>
              <thead><tr><th /><th>名称</th><th>修改日期</th></tr></thead>
              <tbody>
                <tr><td colSpan={3}><GroupLabel><Chevron size={13} sw={0.9} color="#555" />今天 (1)</GroupLabel></td></tr>
                <tr>
                  <td />
                  <FileCell $first><FileName><svg width="11" height="14" viewBox="0 0 11 14"><path d="M.5 .5H7.500L10.500 3.500V13.500H.5Z" fill="#fafafa" stroke="#b5bac0" strokeWidth=".8" /></svg>export.ndjson</FileName></FileCell>
                  <FileCell>2022</FileCell>
                </tr>
              </tbody>
            </FileTable>
          </FileArea>
          <HScroll><Chevron dir="left" sw={1.8} color="#505050" /><HThumb /><Chevron dir="right" sw={1.8} color="#505050" /></HScroll>
        </FilePane>
      </DialogBody>
      <DialogFooter>
        <FieldLabel htmlFor="filename">文件名(<u>N</u>):</FieldLabel>
        <ComboBox><input id="filename" defaultValue="export.ndjson" /><Chevron size={11} sw={1} color="#444" /></ComboBox>
        <TypeSelect><select aria-label="文件类型"><option>NDJSON 文件</option></select><Chevron size={11} sw={1} color="#444" /></TypeSelect>
        <DialogActions>
          <ActionSlot><DialogButton $primary>打开(<u>O</u>)</DialogButton><Marker $inset="-8px -9px -10px -16px" /></ActionSlot>
          <DialogButton>取消</DialogButton>
        </DialogActions>
      </DialogFooter>
      <Grip><svg width="27" height="27" viewBox="0 0 27 27"><path d="M9 0H27V9H9ZM0 14H9V27H0Z" fill="#fff" /><path d="M21 16h2v2h-2zM18 20h2v2h-2zM21 20h2v2h-2zM15 23h2v2h-2zM18 23h2v2h-2zM21 23h2v2h-2z" fill="#bfbfbf" /></svg></Grip>
      <Marker $inset="156px -2px 274px 166px" />
    </Dialog>
  );
}

function InputMethod() {
  return (
    <ImeBar>
      <ImeLogo><svg width="32" height="32" viewBox="0 0 32 32"><path d="M3 5L24 1Q26 1 26.500 3L31 24Q31 26 29 27L9 31Q7 31 6.500 29L1 8Q1 6 3 5Z" fill="#f4541d" /><path d="M24 9C19 5 9 8 10 12C11 16 24 13 24 18C24 23 13 25 8 22" fill="none" stroke="#fff" strokeWidth="4" /></svg></ImeLogo>
      <IconButton $color="#0a6fd8" aria-label="中文"><ImeText>中</ImeText></IconButton>
      <IconButton $color="#0a6fd8" aria-label="标点"><svg width="14" height="14" viewBox="0 0 14 14"><circle cx="3.500" cy="4.500" r="2" fill="none" stroke="currentColor" strokeWidth="1.500" /><path d="M9 6H13V9Q13 12 9.500 13L9 12Q10.500 11 10.500 9.500H9Z" fill="currentColor" /></svg></IconButton>
      <IconButton $color="#0a6fd8" aria-label="语音"><svg width="14" height="17" viewBox="0 0 14 17"><rect x="4" width="6" height="10" rx="3" fill="currentColor" /><path d="M1.500 7Q1.500 12.500 7 12.500T12.500 7M7 12V16M4 16H10" fill="none" stroke="currentColor" strokeWidth="1.600" /></svg></IconButton>
      <IconButton $color="#0a6fd8" aria-label="键盘"><svg width="16" height="14" viewBox="0 0 16 14" fill="none" stroke="currentColor" strokeWidth="1.500"><rect x="1" y="1" width="14" height="12" rx="1" /><path d="M1 5H15M1 9H15M4.500 1V9M8 1V9M11.500 1V9M4.500 9V13M11.500 9V13" /></svg></IconButton>
      <IconButton $color="#0a6fd8" aria-label="皮肤"><svg width="16" height="14" viewBox="0 0 16 14"><path d="M4.500 0Q8 3 11.500 0L16 3L14 7H12.500V14H3.500V7H2L0 3Z" fill="currentColor" /></svg></IconButton>
      <IconButton $w={22} aria-label="工具箱"><svg width="14" height="14" viewBox="0 0 14 14"><rect width="6" height="6" rx="1" fill="#7d6fe0" /><rect x="9" y="1" width="4" height="4" rx="1" fill="none" stroke="#8a63cf" strokeWidth="1.800" /><rect y="8" width="6" height="6" rx="1" fill="#f0805e" /><rect x="8" y="8" width="6" height="6" rx="1" fill="#d97a80" /></svg></IconButton>
    </ImeBar>
  );
}

export default function App() {
  return (
    <>
      <Global />
      <Desktop>
        <Column>
          <BackWindow>
            <BackTabs />
            <BackToolbar />
            <BackTrack>
              <svg width="4" height="4" viewBox="0 0 4 4"><path d="M0 0L4 4H0Z" fill="#444" /></svg>
              <BackThumb />
              <svg width="4" height="4" viewBox="0 0 4 4"><path d="M0 0H4L0 4Z" fill="#444" /></svg>
            </BackTrack>
          </BackWindow>
          <BackTaskbar />
        </Column>
        <Column>
          <Browser />
          <Kibana />
          <Taskbar>
            <TaskItem $gap={147} $width={44} $color="#696b6a" />
            <TaskItem $gap={1} $width={3} $color="#5a5c5b" />
            <TaskItem $gap={99} $width={48} $color="#b36d34" />
            <Clock>11:26</Clock>
          </Taskbar>
        </Column>
        <FileDialog />
        <InputMethod />
        <Watermark>CSDN @梨杏</Watermark>
      </Desktop>
    </>
  );
}
